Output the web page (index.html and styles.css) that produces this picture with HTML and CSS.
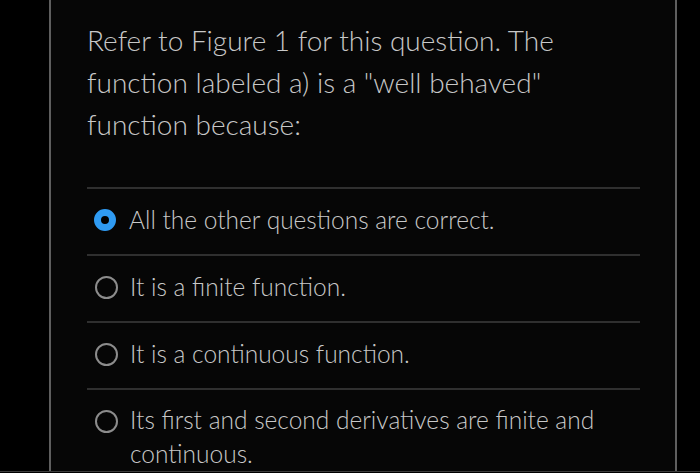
FILE: index.html
```html
<!DOCTYPE html>
<html lang="en">
<head>
  <meta charset="UTF-8">
  <meta name="viewport" content="width=device-width, initial-scale=1.0">
  <title>Question</title>
  <link rel="stylesheet" href="styles.css">
</head>
<body>

  <!-- Question card -->
  <div class="page">
    <div class="card">
      <p class="question">Refer to Figure 1 for this question. The function labeled a) is a "well behaved" function because:</p>

      <div class="answers">
        <label class="answer">
          <span class="radio selected"></span>
          <span class="answer-text">All the other questions are correct.</span>
        </label>
        <label class="answer">
          <span class="radio"></span>
          <span class="answer-text">It is a finite function.</span>
        </label>
        <label class="answer">
          <span class="radio"></span>
          <span class="answer-text">It is a continuous function.</span>
        </label>
        <label class="answer">
          <span class="radio"></span>
          <span class="answer-text">Its first and second derivatives are finite and continuous.</span>
        </label>
      </div>
    </div>
  </div>

</body>
</html>
```

FILE: styles.css
```css
body {
  margin: 0;
  font-family: 'Lato', 'Open Sans', sans-serif;
  background: #000000;
  color: #c8c8c8;
  overflow: hidden;
}

.page {
  height: 472px;
  border-bottom: 1px solid #3c3c3c;
  box-sizing: border-box;
}

.card {
  margin-left: 49px;
  width: 628px;
  height: 100%;
  box-sizing: border-box;
  padding: 19px 35px 0 36px;
  background: #060606;
  border-left: 2px solid #5e5e5e;
  border-right: 2px solid #5e5e5e;
}

.question {
  margin: 0;
  font-size: 28px;
  font-weight: 300;
  line-height: 42px;
}

.answers {
  margin-top: 42px;
}

.answer {
  display: flex;
  align-items: flex-start;
  gap: 12px;
  padding: 13px 0 17px;
  border-top: 2px solid #2f2f2f;
  font-size: 24.5px;
  font-weight: 300;
  line-height: 35px;
}

.answer:last-child {
  padding-top: 13px;
  line-height: 34px;
}

.radio {
  flex: none;
  width: 23px;
  height: 23px;
  margin: 7px 0 0 8px;
  box-sizing: border-box;
  border: 2px solid #8c8c8c;
  border-radius: 50%;
}

.radio.selected {
  width: 22px;
  height: 22px;
  margin-left: 7px;
  margin-right: 1px;
  border: 7px solid #2f9bf3;
  background: #000000;
}
```
